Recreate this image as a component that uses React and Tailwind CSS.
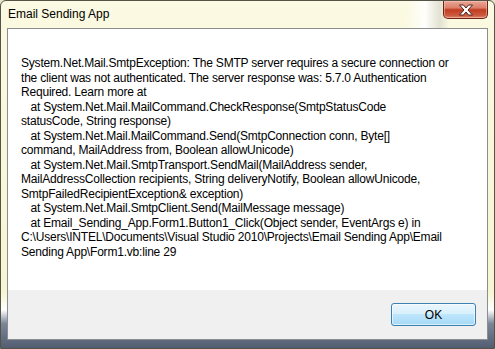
import { useState } from 'react'

const lines = [
  'System.Net.Mail.SmtpException: The SMTP server requires a secure connection or',
  'the client was not authenticated. The server response was: 5.7.0 Authentication',
  'Required. Learn more at',
  '   at System.Net.Mail.MailCommand.CheckResponse(SmtpStatusCode',
  'statusCode, String response)',
  '   at System.Net.Mail.MailCommand.Send(SmtpConnection conn, Byte[]',
  'command, MailAddress from, Boolean allowUnicode)',
  '   at System.Net.Mail.SmtpTransport.SendMail(MailAddress sender,',
  'MailAddressCollection recipients, String deliveryNotify, Boolean allowUnicode,',
  'SmtpFailedRecipientException& exception)',
  '   at System.Net.Mail.SmtpClient.Send(MailMessage message)',
  '   at Email_Sending_App.Form1.Button1_Click(Object sender, EventArgs e) in',
  'C:\\Users\\INTEL\\Documents\\Visual Studio 2010\\Projects\\Email Sending App\\Email',
  'Sending App\\Form1.vb:line 29',
]

function CloseButton() {
  return (
    <button className="
      w-[45px] h-[18px] self-start mr-[6px] flex-shrink-0
      flex items-center justify-center
      rounded-b-[5px] border border-t-0 border-[#6b2219]
      bg-[linear-gradient(to_bottom,#e9a898_0%,#dc7f69_40%,#c23c22_52%,#cc5a3f_85%,#e08a6e_100%)]
      shadow-[inset_0_0_0_1px_rgba(255,210,200,0.45)]
    ">
      <svg width="18" height="12" viewBox="0 0 18 12">
        <path d="M2.5 1h4l2.5 3 2.5-3h4L11 6l4.5 5h-4L9 8l-2.5 3h-4L7 6z"
          fill="#fff" stroke="#4e2420" strokeWidth="1" strokeLinejoin="round" />
      </svg>
    </button>
  )
}

export default function App() {
  const [open] = useState(true)
  if (!open) return null

  return (
    <div className="w-[495px] h-[349px] overflow-hidden bg-[#e8e6c8]">
      <div className="
        w-full h-full flex flex-col rounded-t-[6px]
        border border-[#545446]
        bg-[linear-gradient(to_bottom,#fbfae2_0%,#f7f5d2_84%,#ffffff_89%,#7a8598_93%,#525d72_100%)]
      "
        style={{ fontFamily: '"Segoe UI", "Liberation Sans", Arial, sans-serif' }}
      >
        {/* title bar */}
        <div className="h-[27px] flex items-start relative bg-[linear-gradient(to_right,transparent_0%,transparent_82%,rgba(255,255,255,0.9)_86%,rgba(210,210,200,0.6)_89%,transparent_91%)]">
          <span className="pl-[7px] pt-[6px] text-[12px] leading-[15px] text-[#000]">Email Sending App</span>
          <div className="ml-auto">
            <CloseButton />
          </div>
        </div>

        {/* client area */}
        <div className="mx-[6px] flex-1 flex flex-col border border-[#8b8e90] bg-white">
          <div className="flex-1 pl-[13px] pt-[27px]">
            <div className="text-[12px] leading-[14.5px] text-[#000] tracking-[-0.2px]">
              {lines.map((l, i) => (
                <div key={i} className="whitespace-pre">{l}</div>
              ))}
            </div>
          </div>
          <div className="h-[49px] bg-[#f0f0f0] flex items-start justify-end pr-[11px] pt-[13px]">
            <button className="
              w-[85px] h-[23px] rounded-[3px]
              border border-[#3c7fb1]
              bg-[linear-gradient(to_bottom,#eaf6fd_0%,#d9f0fc_45%,#bee6fd_50%,#a7d9f5_100%)]
              shadow-[inset_0_0_0_1px_rgba(255,255,255,0.6)]
              text-[12px] text-black leading-none
            ">
              OK
            </button>
          </div>
        </div>
        <div className="h-[8px]" />
      </div>
    </div>
  )
}
